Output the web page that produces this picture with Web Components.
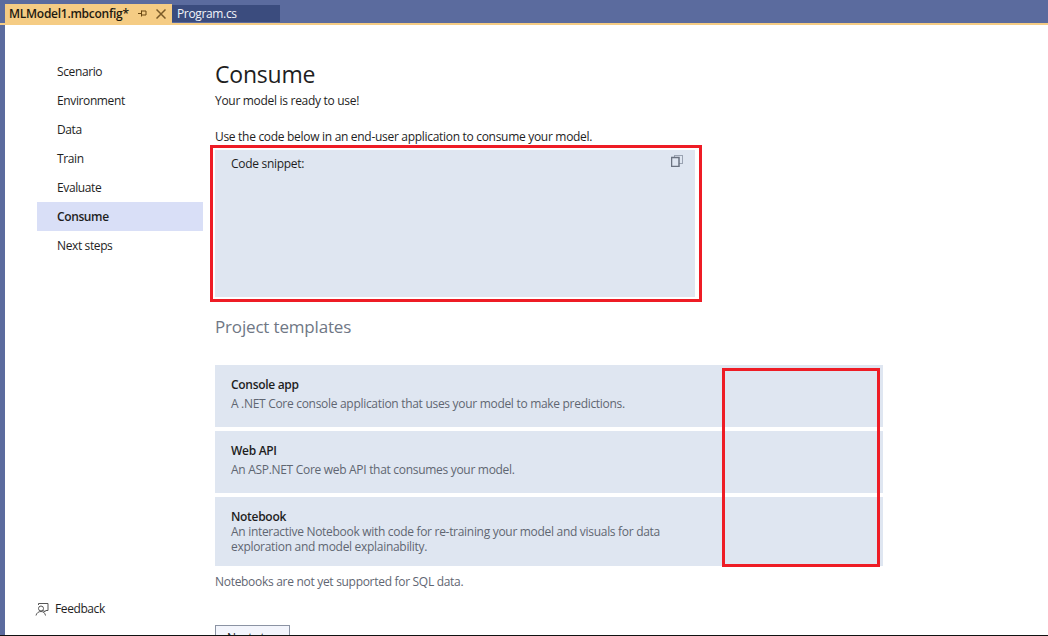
<!DOCTYPE html>
<html>
<head>
<meta charset="utf-8">
<title>Consume</title>
<style>
  html, body { margin: 0; padding: 0; height: 100%; overflow: hidden; background: #fff; }
  body { font: 12px "Open Sans", "Noto Sans", sans-serif; color: #1e1e1e; }
</style>
</head>
<body>
<ml-app>
  <ml-tabbar slot="tabs">
    <ml-tab active>MLModel1.mbconfig*</ml-tab>
    <ml-tab>Program.cs</ml-tab>
  </ml-tabbar>
  <ml-nav slot="nav">
    <ml-nav-item>Scenario</ml-nav-item>
    <ml-nav-item>Environment</ml-nav-item>
    <ml-nav-item>Data</ml-nav-item>
    <ml-nav-item>Train</ml-nav-item>
    <ml-nav-item>Evaluate</ml-nav-item>
    <ml-nav-item selected>Consume</ml-nav-item>
    <ml-nav-item>Next steps</ml-nav-item>
  </ml-nav>
  <ml-consume slot="main"></ml-consume>
</ml-app>

<script>
const FONT = '"Open Sans", "Noto Sans", sans-serif';

class MlApp extends HTMLElement {
  constructor() {
    super();
    this.shadowDOM = this.attachShadow({ mode: 'open' });
    this.shadowDOM.innerHTML = `
      <style>
        :host { display: flex; flex-direction: column; width: 1048px; height: 636px; overflow: hidden; background: #5b6b9e; box-sizing: border-box; border-bottom: 1px solid #111; }
        .body { flex: 1; min-height: 0; display: flex; margin-left: 5px; background: #fff; overflow: hidden; }
      </style>
      <slot name="tabs"></slot>
      <div class="body">
        <slot name="nav"></slot>
        <slot name="main"></slot>
      </div>
    `;
  }
}

class MlTabbar extends HTMLElement {
  constructor() {
    super();
    this.shadowDOM = this.attachShadow({ mode: 'open' });
    this.shadowDOM.innerHTML = `
      <style>
        :host { display: flex; align-items: flex-start; height: 25px; box-sizing: border-box; padding: 4px 0 0 5px; background: #5b6b9e; border-bottom: 2px solid #f5cc84; }
      </style>
      <slot></slot>
    `;
  }
}

class MlTab extends HTMLElement {
  constructor() {
    super();
    this.shadowDOM = this.attachShadow({ mode: 'open' });
    this.shadowDOM.innerHTML = `
      <style>
        :host { display: flex; align-items: center; height: 17px; width: 103px; padding-left: 5px; font: 12px ${FONT}; letter-spacing: -0.35px; color: #f2f4f9; background: #3b4c7e; margin-top: 1px; }
        :host([active]) { width: 163px; height: 19px; margin-top: 0; padding-left: 4px; font-weight: 600; color: #1e1a10; background: #f5cc84; letter-spacing: -0.27px; }
        .tools { display: flex; align-items: center; gap: 9px; margin-left: 9px; }
        svg { display: block; }
      </style>
      <slot></slot>
      <span class="tools" id="tools"></span>
    `;
  }

  connectedCallback() {
    if (!this.hasAttribute('active')) return;
    this.shadowDOM.getElementById('tools').innerHTML = `
      <svg width="9" height="7" viewBox="0 0 9 7" fill="none" stroke="#6a4710"><path d="M0 3.500h3M3.500 0.500v6M3.500 1h4.500v4h-4.500"/></svg>
      <svg width="10" height="10" viewBox="0 0 10 10" fill="none" stroke="#7a5a28" stroke-width="1.500"><path d="M0.500 0.500l9 9M9.500 0.500l-9 9"/></svg>
    `;
  }
}

class MlNav extends HTMLElement {
  constructor() {
    super();
    this.shadowDOM = this.attachShadow({ mode: 'open' });
    this.shadowDOM.innerHTML = `
      <style>
        :host { display: flex; flex-direction: column; flex: none; width: 198px; box-sizing: border-box; padding: 32px 0 0 32px; }
        .list { display: flex; flex-direction: column; width: 166px; flex: 1; }
        .feedback { display: flex; align-items: center; gap: 6px; margin: 0 0 18px -2px; font: 12px ${FONT}; letter-spacing: -0.4px; color: #1e1e1e; }
        svg { display: block; }
      </style>
      <div class="list"><slot></slot></div>
      <div class="feedback">
        <svg width="14" height="14" viewBox="0 0 14 14" fill="none" stroke="#555" stroke-width="1"><path d="M3.500 3V1.500h9.500v7h-2.500M8 8.500l2 1.500V8.500"/><circle cx="6" cy="6.500" r="2.500"/><path d="M1 13.500c.5-2.500 2.500-4 5-4s4 1.500 4.500 4"/></svg>
        <span>Feedback</span>
      </div>
    `;
  }
}

class MlNavItem extends HTMLElement {
  constructor() {
    super();
    this.shadowDOM = this.attachShadow({ mode: 'open' });
    this.shadowDOM.innerHTML = `
      <style>
        :host { display: flex; align-items: center; height: 29px; padding-left: 20px; font: 12px ${FONT}; letter-spacing: -0.38px; color: #1e1e1e; }
        :host([selected]) { background: #d9dff7; font-weight: 600; }
      </style>
      <slot></slot>
    `;
  }
}

class MlCodeBox extends HTMLElement {
  constructor() {
    super();
    this.shadowDOM = this.attachShadow({ mode: 'open' });
    this.shadowDOM.innerHTML = `
      <style>
        :host { display: flex; justify-content: space-between; align-items: flex-start; width: 480px; height: 147px; box-sizing: border-box; padding: 5px 12px 0 16px; background: #dfe6f1; font: 12px ${FONT}; letter-spacing: -0.3px; color: #1e1e1e; }
        svg { display: block; }
      </style>
      <slot></slot>
      <svg width="12" height="12" viewBox="0 0 12 12" fill="none" stroke="#6a7280"><rect x="3.500" y="0.500" width="8" height="8" stroke="#9aa3b2"/><rect x="0.500" y="2.500" width="7.500" height="9" fill="#dfe6f1" stroke-width="1.500"/></svg>
    `;
  }
}

class MlTemplateCard extends HTMLElement {
  constructor() {
    super();
    this.shadowDOM = this.attachShadow({ mode: 'open' });
    this.shadowDOM.innerHTML = `
      <style>
        :host { display: block; box-sizing: border-box; height: 62px; padding: 12px 16px 0; background: #dfe6f1; font: 12px ${FONT}; }
        :host([tall]) { height: 69px; }
        .name { font-weight: 600; letter-spacing: -0.3px; color: #1e1e1e; line-height: 16px; }
        .desc { margin-top: 3px; letter-spacing: -0.3px; color: #5f6672; line-height: 15px; max-width: 470px; }
        :host([tall]) .desc { margin-top: -1px; }
      </style>
      <div class="name"><slot name="name"></slot></div>
      <div class="desc"><slot></slot></div>
    `;
  }
}

class MlCallout extends HTMLElement {
  constructor() {
    super();
    this.shadowDOM = this.attachShadow({ mode: 'open' });
    this.shadowDOM.innerHTML = `
      <style>
        :host { display: block; position: absolute; box-sizing: border-box; border: 3px solid #ee1c25; pointer-events: none; }
      </style>
    `;
  }
}

class MlConsume extends HTMLElement {
  constructor() {
    super();
    this.shadowDOM = this.attachShadow({ mode: 'open' });
    this.shadowDOM.innerHTML = `
      <style>
        :host { display: block; flex: 1; position: relative; box-sizing: border-box; padding: 34px 0 0 12px; font: 12px ${FONT}; color: #1e1e1e; letter-spacing: -0.3px; }
        h1 { margin: 0; font: 400 23px/30px ${FONT}; letter-spacing: -0.2px; color: #1e1e1e; }
        p { margin: 0; line-height: 16px; }
        .ready { margin-top: 4px; }
        .use { margin-top: 20px; margin-bottom: 5px; }
        h2 { margin: 18px 0 0; font: 400 17px/24px ${FONT}; letter-spacing: -0.17px; color: #6f7785; }
        .cards { display: flex; flex-direction: column; gap: 4px; width: 668px; margin-top: 26px; }
        .note { margin-top: 8px; color: #5f6672; }
        button { display: block; margin-top: 35px; width: 75px; height: 26px; padding: 0 0 1px; border: 1px solid #8b93a3; background: #f3f5fc; font: 12px ${FONT}; letter-spacing: -0.3px; color: #1e1e1e; }
        ml-callout.code { left: 7px; top: 120px; width: 492px; height: 157px; }
        ml-callout.actions { left: 519px; top: 343px; width: 158px; height: 199px; }
      </style>
      <h1>Consume</h1>
      <p class="ready">Your model is ready to use!</p>
      <p class="use">Use the code below in an end-user application to consume your model.</p>
      <ml-code-box>Code snippet:</ml-code-box>
      <h2>Project templates</h2>
      <div class="cards">
        <ml-template-card><span slot="name">Console app</span>A .NET Core console application that uses your model to make predictions.</ml-template-card>
        <ml-template-card><span slot="name">Web API</span>An ASP.NET Core web API that consumes your model.</ml-template-card>
        <ml-template-card tall><span slot="name">Notebook</span>An interactive Notebook with code for re-training your model and visuals for data exploration and model explainability.</ml-template-card>
      </div>
      <p class="note">Notebooks are not yet supported for SQL data.</p>
      <button>Next step</button>
      <ml-callout class="code"></ml-callout>
      <ml-callout class="actions"></ml-callout>
    `;
  }
}

customElements.define('ml-app', MlApp);
customElements.define('ml-tabbar', MlTabbar);
customElements.define('ml-tab', MlTab);
customElements.define('ml-nav', MlNav);
customElements.define('ml-nav-item', MlNavItem);
customElements.define('ml-code-box', MlCodeBox);
customElements.define('ml-template-card', MlTemplateCard);
customElements.define('ml-callout', MlCallout);
customElements.define('ml-consume', MlConsume);
</script>
</body>
</html>
